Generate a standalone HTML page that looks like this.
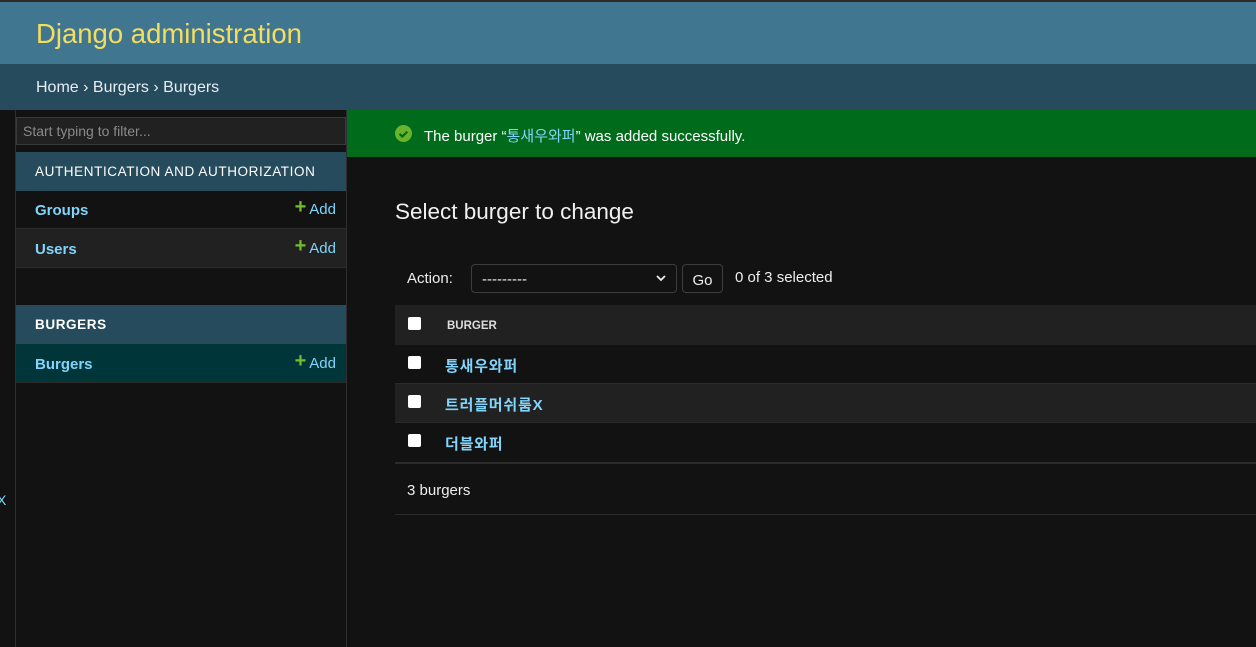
<!DOCTYPE html>
<html><head><meta charset="utf-8"><style>
*{box-sizing:border-box;margin:0;padding:0}
body{width:1256px;height:647px;overflow:hidden;background:#121212;font-family:"Liberation Sans","Noto Sans CJK KR",sans-serif;color:#eee;position:relative;font-size:14px}
.a{position:absolute}
#hdr{left:0;top:0;width:1256px;height:64px;background:#417690;border-top:2px solid #2b2b2b}
#hdr span{position:absolute;left:36px;top:16px;font-size:27.5px;color:#f5dd5d;font-weight:300}
#bc{left:0;top:64px;width:1256px;height:46px;background:#264b5d;color:#e6eef2;font-size:16px;padding:15px 36px}
#side{left:15px;top:110px;width:332px;height:537px;border-left:1px solid #2f2f2f;border-right:1px solid #2f2f2f}
.filter{left:16px;top:117px;width:330px;height:28px;background:#212121;border:1px solid #3a3a3a;color:#8a8a8a;font-size:14px;padding:5px 6px}
.cap{left:16px;width:330px;height:39px;background:#264b5d;color:#fff;font-size:13.5px;letter-spacing:.6px;padding:12px 19px}
.row{left:16px;width:330px;height:39px;border-bottom:1px solid #2b2b2b;font-size:15px;font-weight:bold;color:#81d4fa;padding:12px 19px}
.row .add{position:absolute;right:10px;top:11px;font-weight:normal;color:#81d4fa;font-size:15px}
.row .add b{color:#70bf2b;font-size:20px;margin-right:3px;position:relative;top:-1px;line-height:10px}
#msg{left:347px;top:110px;width:909px;height:47px;background:#006b1b;font-size:15px;color:#fff;padding:15px 0 0 77px}
h1{position:absolute;left:395px;top:199px;font-size:22.5px;font-weight:300;color:#f0f0f0}
.th{left:395px;top:305px;width:861px;height:40px;background:#212121}
.tr{left:395px;width:861px;height:39px;border-bottom:1px solid #2b2b2b}
.cb{position:absolute;left:13px;width:13px;height:13px;background:#fff;border-radius:2px}
.tr span{position:absolute;left:50px;top:10px;font-weight:bold;color:#81d4fa;font-size:15px;letter-spacing:.8px}
</style></head><body>
<div id="hdr" class="a"><span>Django administration</span></div>
<div id="bc" class="a">Home › Burgers › Burgers</div>
<div id="side" class="a"></div>
<div class="a filter">Start typing to filter...</div>
<div class="a cap" style="top:152px">AUTHENTICATION AND AUTHORIZATION</div>
<div class="a row" style="top:190px">Groups<span class="add"><b>+</b>Add</span></div>
<div class="a row" style="top:229px;background:#212121">Users<span class="add"><b>+</b>Add</span></div>
<div class="a cap" style="top:305px;font-weight:bold">BURGERS</div>
<div class="a row" style="top:344px;background:#00363a">Burgers<span class="add"><b>+</b>Add</span></div>
<div class="a" style="left:-3px;top:492px;color:#81d4fa;font-size:14px">X</div>
<div id="msg" class="a"><svg class="a" style="left:48px;top:15px" width="17" height="17"><circle cx="8.5" cy="8.5" r="8.5" fill="#6ab42c"/><path d="M4.5 8.8l2.8 2.8 5-5" stroke="#006b1b" stroke-width="2.2" fill="none"/></svg>The burger “<span style="color:#81d4fa">통새우와퍼</span>” was added successfully.</div>
<h1>Select burger to change</h1>
<div class="a" style="left:407px;top:270px;font-size:15px">Action:</div>
<div class="a" style="left:471px;top:264px;width:206px;height:29px;border:1px solid #3d3d3d;border-radius:4px;background:#121212;padding:6px 10px;font-size:15px">---------<svg style="position:absolute;right:10px;top:10px" width="10" height="7"><path d="M1 1l4 4 4-4" stroke="#eee" stroke-width="1.8" fill="none"/></svg></div>
<div class="a" style="left:682px;top:264px;width:41px;height:29px;border:1px solid #3d3d3d;border-radius:4px;padding:7px 0;text-align:center;font-size:15px">Go</div>
<div class="a" style="left:735px;top:269px;font-size:15px">0 of 3 selected</div>
<div class="a th"><div class="cb" style="top:12px"></div><span style="position:absolute;left:52px;top:15px;font-size:11.5px;font-weight:bold;color:#ddd">BURGER</span></div>
<div class="a tr" style="top:345px"><div class="cb" style="top:11px"></div><span>통새우와퍼</span></div>
<div class="a tr" style="top:384px;background:#212121"><div class="cb" style="top:11px"></div><span>트러플머쉬룸X</span></div>
<div class="a tr" style="top:423px;border-bottom:2px solid #2b2b2b;height:41px"><div class="cb" style="top:11px"></div><span>더블와퍼</span></div>
<div class="a" style="left:407px;top:482px;font-size:15px">3 burgers</div>
<div class="a" style="left:395px;top:514px;width:861px;height:1px;background:#2b2b2b"></div>
</body></html>
